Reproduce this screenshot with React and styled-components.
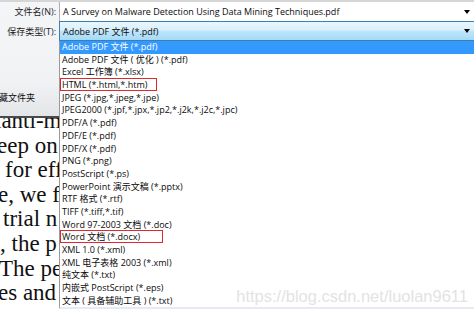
import React from "react";
import styled, { createGlobalStyle } from "styled-components";

const GlobalStyle = createGlobalStyle`
  html, body {
    margin: 0;
    padding: 0;
    background: #fff;
    overflow: hidden;
  }
`;

const fileTypes = [
  { label: "Adobe PDF 文件 (*.pdf)", active: true },
  { label: "Adobe PDF 文件 ( 优化 ) (*.pdf)" },
  { label: "Excel 工作簿 (*.xlsx)" },
  { label: "HTML (*.html,*.htm)", mark: 97 },
  { label: "JPEG (*.jpg,*.jpeg,*.jpe)" },
  { label: "JPEG2000 (*.jpf,*.jpx,*.jp2,*.j2k,*.j2c,*.jpc)" },
  { label: "PDF/A (*.pdf)" },
  { label: "PDF/E (*.pdf)" },
  { label: "PDF/X (*.pdf)" },
  { label: "PNG (*.png)" },
  { label: "PostScript (*.ps)" },
  { label: "PowerPoint 演示文稿 (*.pptx)" },
  { label: "RTF 格式 (*.rtf)" },
  { label: "TIFF (*.tiff,*.tif)" },
  { label: "Word 97-2003 文档 (*.doc)" },
  { label: "Word 文档 (*.docx)", mark: 103 },
  { label: "XML 1.0 (*.xml)" },
  { label: "XML 电子表格 2003 (*.xml)" },
  { label: "纯文本 (*.txt)" },
  { label: "内嵌式 PostScript (*.eps)" },
  { label: "文本 ( 具备辅助工具 ) (*.txt)" },
];

// what shows of the paper behind the dialog, cut by the list on the right
const paperLines = [
  { text: "ianti-m", indent: -5 },
  { text: "eep on", indent: -3 },
  { text: "for eff", indent: 5 },
  { text: "e, we f", indent: -2 },
  { text: "trial n", indent: 3 },
  { text: ", the p", indent: 0 },
  { text: "The per", indent: -1 },
  { text: "es and", indent: -2 },
];

const Screen = styled.div`
  position: relative;
  width: 474px;
  height: 310px;
  overflow: hidden;
  background: #fff;
  font-family: "Open Sans", "Noto Sans CJK SC", sans-serif;
  font-size: 9px;
  color: #0a0a0a;
`;

const Dialog = styled.div`
  position: relative;
  z-index: 1;
  height: 118px;
  background: linear-gradient(#f4f5f7 0%, #f1f2f4 70%, #e4e5e8 100%);
  border-bottom: 2px solid #4a4a4a;
  border-top: 2px solid #d6d6d6;
  box-sizing: border-box;
  display: grid;
  grid-template-columns: 59px 1fr;
  grid-template-rows: 19px 20px 1fr;
  align-items: center;
`;

const Label = styled.div`
  text-align: right;
  padding-right: 3px;
  white-space: nowrap;
  color: #1c1c1c;
`;

const Box = styled.div`
  height: 100%;
  box-sizing: border-box;
  display: flex;
  align-items: center;
  justify-content: space-between;
  padding: 0 4px 0 3px;
  white-space: nowrap;
`;

const FileInput = styled(Box)`
  background: #fff;
  border-left: 1px solid #abadb3;
`;

const TypeSelect = styled(Box)`
  border: 1px solid #3c7fb1;
  border-right: none;
  background: linear-gradient(#eaf6fd 0%, #d9f0fc 45%, #bee6fd 50%, #a7d9f5 100%);
`;

const Arrow = styled.span`
  width: 0;
  height: 0;
  border-left: 3px solid transparent;
  border-right: 3px solid transparent;
  border-top: 4px solid #000;
`;

const Folder = styled.div`
  grid-column: 1 / 2;
  align-self: start;
  margin-top: 50px;
  margin-left: -10px;
  white-space: nowrap;
`;

const Paper = styled.div`
  margin-top: -9px;
  font-family: "Liberation Serif", "DejaVu Serif", serif;
  font-size: 23px;
  line-height: 24.6px;
  color: #111;
`;

const PaperLine = styled.div`
  white-space: nowrap;
  margin-left: ${(p) => p.$indent}px;
`;

const DropList = styled.ul`
  position: absolute;
  z-index: 2;
  left: 59px;
  top: 41px;
  right: 0;
  margin: 0;
  padding: 0;
  list-style: none;
  background: #fff;
  border-left: 1px solid #9a9a9a;
  border-bottom: 2px solid #e6ebf3;
`;

const Item = styled.li`
  position: relative;
  height: 12.7px;
  line-height: 12.7px;
  padding-left: 2px;
  white-space: nowrap;
  background: ${(p) => (p.$active ? "#3399ff" : "transparent")};
  color: ${(p) => (p.$active ? "#fff" : "#0a0a0a")};
`;

const Mark = styled.span`
  position: absolute;
  left: 0;
  top: -1px;
  height: 13px;
  border: 1.5px solid #e0282c;
  box-sizing: border-box;
`;

const Watermark = styled.div`
  position: absolute;
  z-index: 3;
  right: 6px;
  bottom: 4px;
  font-family: "Liberation Sans", Arial, sans-serif;
  font-size: 16.5px;
  color: #e3e3e3;
`;

export default function App() {
  return (
    <>
      <GlobalStyle />
      <Screen>
        <Dialog>
          <Label>文件名(N):</Label>
          <FileInput>
            A Survey on Malware Detection Using Data Mining Techniques.pdf
            <Arrow />
          </FileInput>
          <Label>保存类型(T):</Label>
          <TypeSelect>
            Adobe PDF 文件 (*.pdf)
            <Arrow />
          </TypeSelect>
          <Folder>隐藏文件夹</Folder>
        </Dialog>
        <Paper>
          {paperLines.map((line) => (
            <PaperLine key={line.text} $indent={line.indent}>
              {line.text}
            </PaperLine>
          ))}
        </Paper>
        <DropList>
          {fileTypes.map((t) => (
            <Item key={t.label} $active={t.active}>
              {t.label}
              {t.mark && <Mark style={{ width: t.mark }} />}
            </Item>
          ))}
        </DropList>
        <Watermark>https://blog.csdn.net/luolan9611</Watermark>
      </Screen>
    </>
  );
}
